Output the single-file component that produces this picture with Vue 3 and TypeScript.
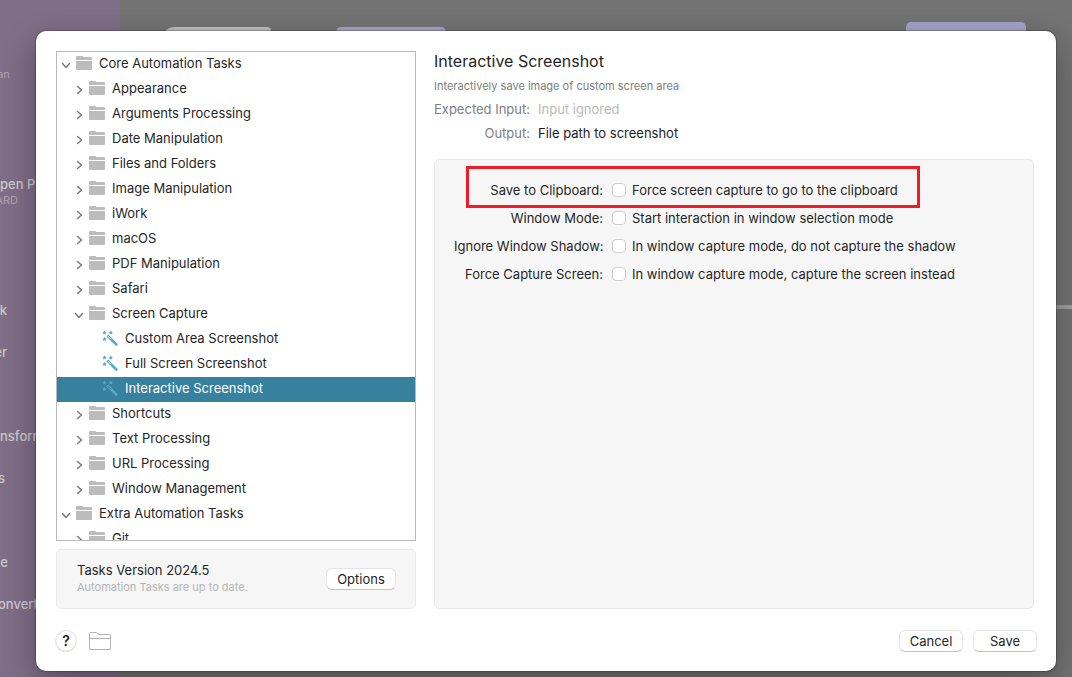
<script setup lang="ts">
import { ref } from 'vue'

interface TreeRow {
  label: string
  depth: number
  kind: 'open' | 'closed' | 'task'
}

interface Option {
  id: string
  label: string
  text: string
  marked: boolean
}

const folders = (labels: string[]): TreeRow[] =>
  labels.map((label) => ({ label, depth: 1, kind: 'closed' }))

const rows: TreeRow[] = [
  { label: 'Core Automation Tasks', depth: 0, kind: 'open' },
  ...folders([
    'Appearance',
    'Arguments Processing',
    'Date Manipulation',
    'Files and Folders',
    'Image Manipulation',
    'iWork',
    'macOS',
    'PDF Manipulation',
    'Safari',
  ]),
  { label: 'Screen Capture', depth: 1, kind: 'open' },
  { label: 'Custom Area Screenshot', depth: 2, kind: 'task' },
  { label: 'Full Screen Screenshot', depth: 2, kind: 'task' },
  { label: 'Interactive Screenshot', depth: 2, kind: 'task' },
  ...folders(['Shortcuts', 'Text Processing', 'URL Processing', 'Window Management']),
  { label: 'Extra Automation Tasks', depth: 0, kind: 'open' },
  ...folders(['Git']),
]

const selected = ref('Interactive Screenshot')

const options: Option[] = [
  { id: 'clipboard', label: 'Save to Clipboard:', text: 'Force screen capture to go to the clipboard', marked: true },
  { id: 'window-mode', label: 'Window Mode:', text: 'Start interaction in window selection mode', marked: false },
  { id: 'shadow', label: 'Ignore Window Shadow:', text: 'In window capture mode, do not capture the shadow', marked: false },
  { id: 'screen', label: 'Force Capture Screen:', text: 'In window capture mode, capture the screen instead', marked: false },
]

const checked = ref<string[]>([])

const sidebarItems = [
  { text: 'k', width: 7 },
  { text: 'er', width: 7 },
  { text: '', width: 0 },
  { text: 'nsform', width: 44 },
  { text: 's', width: 5 },
  { text: '', width: 0 },
  { text: 'e', width: 8 },
  { text: 'onvert', width: 38 },
]
</script>

<template>
  <div class="page">
    <div class="backdrop" aria-hidden="true">
      <div class="sidebar">
        <span class="side-caption">an</span>
        <span class="side-heading">pen Pr</span>
        <span class="side-sub">ARD</span>
        <div class="side-list">
          <span v-for="(item, i) in sidebarItems" :key="i" class="side-item" :style="{ width: item.width + 'px' }">{{ item.text }}</span>
        </div>
      </div>
      <div class="workspace">
        <i class="tab tab-light"></i>
        <i class="tab tab-violet"></i>
        <i class="tab tab-tall"></i>
        <i class="divider"></i>
      </div>
    </div>

    <main class="dialog" role="dialog" aria-labelledby="task-title">
      <div class="columns">
        <section class="left">
          <ul class="tree" role="tree" aria-label="Automation tasks">
            <li v-for="row in rows" :key="row.label" role="none">
              <button
                type="button"
                role="treeitem"
                class="row"
                :class="['depth-' + row.depth, { selected: selected === row.label }]"
                :aria-selected="selected === row.label"
                @click="selected = row.label"
              >
                <svg v-if="row.kind === 'open'" class="chevron" viewBox="0 0 10 10"><path d="M1.5 3.5 5 7.5l3.5-4" /></svg>
                <svg v-else-if="row.kind === 'closed'" class="chevron" viewBox="0 0 10 10"><path d="M3.5 1.5 7.5 5l-4 3.5" /></svg>
                <svg v-if="row.kind === 'task'" class="wand" viewBox="0 0 17 17">
                  <path d="M2.500.5l.7 1.300 1.500.2-1.100 1 .3 1.500-1.400-.7-1.400.7.3-1.500L.3 2l1.500-.2zM8.800.5l.7 1.300 1.500.2-1.100 1 .3 1.500-1.400-.7-1.400.7.3-1.500-1.100-1 1.500-.2zM2.500 7l.7 1.300 1.500.2-1.100 1 .3 1.500-1.400-.7-1.400.7.3-1.500-1.100-1 1.500-.2z" />
                  <path d="M4.400 6.400 6.200 4.600l9.200 9.100q.7.800-.2 1.700t-1.700.2z" />
                  <path class="slot" d="M6 6.200l3 3" />
                </svg>
                <svg v-else class="folder" viewBox="0 0 16 14">
                  <path d="M0 4V1.200Q0 0 1.200 0H6q1 0 1.300 1H15q1 0 1 1v2zM0 5h16v8q0 1-1 1H1q-1 0-1-1z" />
                </svg>
                <span>{{ row.label }}</span>
              </button>
            </li>
          </ul>
          <div class="status">
            <div>
              <div class="version">Tasks Version 2024.5</div>
              <div class="uptodate">Automation Tasks are up to date.</div>
            </div>
            <button type="button" class="push options">Options</button>
          </div>
        </section>

        <section class="right">
          <h1 id="task-title">Interactive Screenshot</h1>
          <p class="description">Interactively save image of custom screen area</p>
          <dl class="facts">
            <dt>Expected Input:</dt>
            <dd class="muted">Input ignored</dd>
            <dt>Output:</dt>
            <dd>File path to screenshot</dd>
          </dl>
          <form class="panel" @submit.prevent>
            <div v-for="opt in options" :key="opt.id" class="option" :class="{ marked: opt.marked }">
              <label class="option-name" :for="opt.id">{{ opt.label }}</label>
              <input :id="opt.id" v-model="checked" type="checkbox" :value="opt.id" />
              <label :for="opt.id">{{ opt.text }}</label>
            </div>
          </form>
        </section>
      </div>

      <footer class="footer">
        <button type="button" class="help" aria-label="Help">?</button>
        <button type="button" class="reveal" aria-label="Open folder">
          <svg viewBox="0 0 22 18">
            <path d="M.5 16V1.500Q.5.500 1.500.500h6l2.500 2h10.500q1 0 1 1V16q0 1.500-1.500 1.500H2Q.5 17.500.5 16zM.5 6.500h21" />
          </svg>
        </button>
        <span class="spacer"></span>
        <button type="button" class="push">Cancel</button>
        <button type="button" class="push">Save</button>
      </footer>
    </main>
  </div>
</template>

<style>
body {
  margin: 0;
}
</style>

<style scoped>
*,
*::after {
  box-sizing: border-box;
}

.page {
  position: relative;
  height: 100vh;
  padding: 31px 16px 6px 36px;
  overflow: hidden;
  font: 13px/18px Inter, 'Liberation Sans', sans-serif;
  color: #262626;
}

button {
  padding: 0;
  border: 0;
  font: inherit;
  color: inherit;
  background: none;
}

.backdrop {
  position: absolute;
  inset: 0;
  display: flex;
}

.sidebar {
  display: flex;
  flex-direction: column;
  width: 120px;
  padding-top: 66px;
  overflow: hidden;
  background: #7e6e87;
  color: #cbc8cd;
  font-weight: 500;
}

.side-caption,
.side-sub {
  display: flex;
  justify-content: flex-end;
  height: 16px;
  font-size: 11px;
  line-height: 16px;
  color: #a99eae;
}

.side-caption {
  width: 10px;
  margin-bottom: 93px;
}

.side-heading {
  height: 17px;
}

.side-sub {
  width: 18px;
}

.side-list {
  display: grid;
  grid-auto-rows: 42px;
  padding-top: 81px;
}

.side-item {
  display: flex;
  align-items: center;
  justify-content: flex-end;
}

.workspace {
  position: relative;
  flex: 1;
  background: #737373;
}

.tab,
.divider {
  position: absolute;
}

.tab {
  top: 27px;
  width: 110px;
  height: 20px;
  border-radius: 5px 5px 0 0;
  background: #a3a1c9;
}

.tab-light {
  left: 41px;
  border-radius: 14px 4px 0 0;
  background: #bcbcbc;
}

.tab-violet {
  left: 216px;
}

.tab-tall {
  top: 22px;
  right: 46px;
  width: 120px;
}

.divider {
  top: 305px;
  right: 0;
  width: 20px;
  height: 4px;
  background: #9d9d9d;
}

.dialog {
  position: relative;
  display: flex;
  flex-direction: column;
  height: 100%;
  padding: 20px 19px 19px 20px;
  border-radius: 10px;
  background: #fff;
  box-shadow: 0 0 1px 1px rgba(0, 0, 0, 0.22), 0 12px 32px rgba(0, 0, 0, 0.32);
}

.columns {
  display: grid;
  flex: 1;
  grid-template-columns: 360px 1fr;
  gap: 18px;
  min-height: 0;
  padding-right: 3px;
}

.left,
.right {
  display: flex;
  flex-direction: column;
  min-height: 0;
}

.left {
  gap: 8px;
}

.tree {
  flex: 1;
  min-height: 0;
  margin: 0;
  padding: 0;
  overflow: hidden;
  border: 1px solid #b9b9b9;
  list-style: none;
}

.row {
  display: flex;
  align-items: center;
  width: 100%;
  height: 25px;
  padding: 0 0 3px 4px;
  text-align: left;
}

.depth-1 {
  padding-left: 17px;
}

.depth-2 {
  padding-left: 45px;
}

.selected {
  background: #37809e;
  color: #fff;
}

.chevron {
  flex: none;
  width: 10px;
  height: 10px;
  margin: 3px 5px 0 0;
  fill: none;
  stroke: #7a7a7a;
  stroke-width: 1.5;
  stroke-linecap: round;
  stroke-linejoin: round;
}

.folder {
  flex: none;
  width: 16px;
  height: 14px;
  margin-right: 7px;
  fill: #bcbcbc;
}

.wand {
  flex: none;
  width: 17px;
  height: 17px;
  margin-right: 6px;
  fill: #55abc4;
}

.wand .slot {
  fill: none;
  stroke: #fff;
  stroke-width: 1;
}

.selected .wand .slot {
  stroke: #37809e;
}

.status {
  display: flex;
  align-items: center;
  justify-content: space-between;
  height: 60px;
  padding: 0 19px 0 20px;
  border: 1px solid #e9e9e9;
  border-radius: 5px;
  background: #f6f6f6;
}

.version {
  line-height: 17px;
}

.uptodate {
  padding-bottom: 1px;
  font-size: 11px;
  line-height: 16px;
  color: #b5b5b5;
}

.push {
  width: 64px;
  height: 22px;
  border: 1px solid #e4e4e4;
  border-bottom-color: #c4c4c4;
  border-radius: 6px;
  line-height: 20px;
  background: #fff;
}

.options {
  width: 70px;
}

h1 {
  margin: 0;
  font-size: 16px;
  line-height: 20px;
  font-weight: 400;
}

.description {
  margin: 7px 0 6px;
  font-size: 11px;
  line-height: 16px;
  color: #7d7d7d;
}

.facts {
  display: grid;
  grid-template-columns: 96px 1fr;
  gap: 6px 8px;
  margin: 0 0 17px;
  color: #1c1c1c;
}

.facts dt {
  text-align: right;
  color: #808080;
}

.facts dd {
  margin: 0;
}

.facts .muted {
  color: #b9b9b9;
}

.panel {
  flex: 1;
  padding: 16px 19px;
  border: 1px solid #e9e9e9;
  border-radius: 5px;
  background: #f6f6f6;
}

.option {
  position: relative;
  display: flex;
  align-items: center;
  height: 28px;
  white-space: nowrap;
}

.option-name {
  width: 149px;
  text-align: right;
}

.option input {
  width: 14px;
  height: 14px;
  margin: 0 6px 0 9px;
  appearance: none;
  border: 1px solid #cfcfcf;
  border-radius: 4px;
  background: #fff;
}

.option input:checked {
  background: #37809e;
}

.marked::after {
  position: absolute;
  top: -10px;
  left: 12px;
  width: 454px;
  height: 42px;
  border: 3px solid #ee1c25;
  content: '';
  pointer-events: none;
}

.footer {
  display: flex;
  align-items: center;
  padding-top: 21px;
}

.help {
  width: 20px;
  height: 20px;
  border-radius: 50%;
  font-size: 14px;
  font-weight: 600;
  line-height: 20px;
  box-shadow: 0 0 0 1px #e8e8e8, 0 1px 1px rgba(0, 0, 0, 0.3);
}

.reveal {
  width: 22px;
  height: 18px;
  margin-left: 13px;
}

.reveal svg {
  display: block;
  fill: none;
  stroke: #b2b2b2;
}

.spacer {
  flex: 1;
}

.footer .push + .push {
  margin-left: 10px;
}
</style>
